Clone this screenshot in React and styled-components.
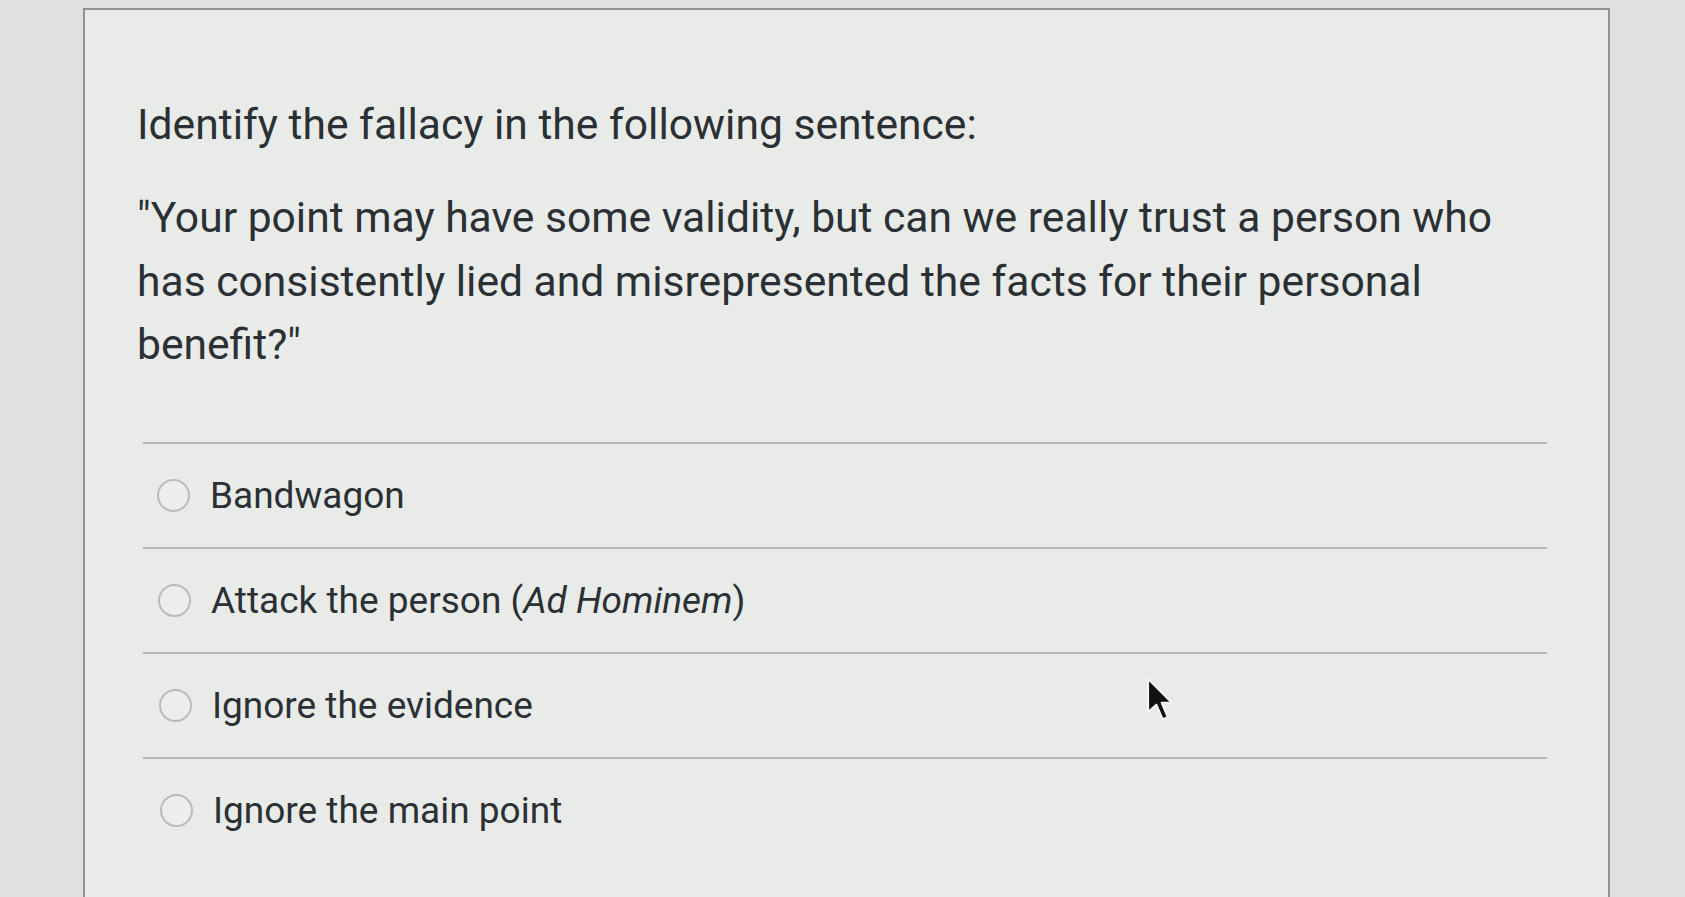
import React from 'react';
import styled, { createGlobalStyle } from 'styled-components';

const GlobalStyle = createGlobalStyle`
  html, body {
    margin: 0;
    padding: 0;
    background: #dfe1df;
    font-family: Roboto, "Liberation Sans", Arial, sans-serif;
  }
`;

const Page = styled.div`
  position: relative;
  width: 1685px;
  height: 897px;
  overflow: hidden;
  padding-top: 8px;
  box-sizing: border-box;
`;

const Card = styled.div`
  margin-left: 83px;
  width: 1527px;
  min-height: 960px;
  box-sizing: border-box;
  background: #e9ebe9;
  border: 2px solid #8f9393;
  padding: 83px 0 0 52px;
  color: #2a3033;
`;

const Prompt = styled.p`
  margin: 0;
  font-size: 42.6px;
  line-height: 63px;
`;

const Quote = styled.p`
  margin: 30px 0 0;
  width: 1400px;
  font-size: 42.6px;
  line-height: 63.5px;
`;

const Answers = styled.div`
  margin-top: 65px;
  margin-left: 6px;
  width: 1404px;
  display: flex;
  flex-direction: column;
`;

const Answer = styled.label`
  height: 105px;
  box-sizing: border-box;
  border-top: 2px solid #b4b7b6;
  display: flex;
  align-items: center;
  gap: 20px;
  padding-left: ${p => p.$indent || 17}px;
`;

const Radio = styled.span`
  width: 29px;
  height: 29px;
  border-radius: 50%;
  border: 2px solid #b9bcbc;
  background: #eceeec;
  flex-shrink: 0;
`;

const AnswerText = styled.span`
  font-size: 37px;
  color: #2a3033;
`;

const Cursor = styled.svg`
  position: absolute;
  left: 1146px;
  top: 676px;
  width: 29px;
  height: 47px;
`;

const answers = [
  { key: 'a', label: 'Bandwagon', indent: 14 },
  { key: 'b', label: <>Attack the person (<em>Ad Hominem</em>)</>, indent: 15 },
  { key: 'c', label: 'Ignore the evidence', indent: 16 },
  { key: 'd', label: 'Ignore the main point', indent: 17 },
];

const App = () => {
  return (
    <Page>
      <GlobalStyle />
      <Card>
        <Prompt>Identify the fallacy in the following sentence:</Prompt>
        <Quote>
          "Your point may have some validity, but can we really trust a person who has
          consistently lied and misrepresented the facts for their personal benefit?"
        </Quote>
        <Answers>
          {answers.map(a => (
            <Answer key={a.key} $indent={a.indent}>
              <Radio />
              <AnswerText>{a.label}</AnswerText>
            </Answer>
          ))}
        </Answers>
      </Card>
      <Cursor viewBox="0 0 14 22">
        <path
          d="M1 1 L1 17 L5 13.5 L8 20.5 L10.5 19.5 L7.6 12.6 L12.5 12.6 Z"
          fill="#111"
          stroke="#f4f4f4"
          strokeWidth="1"
          strokeLinejoin="round"
        />
      </Cursor>
    </Page>
  );
};

export default App;
